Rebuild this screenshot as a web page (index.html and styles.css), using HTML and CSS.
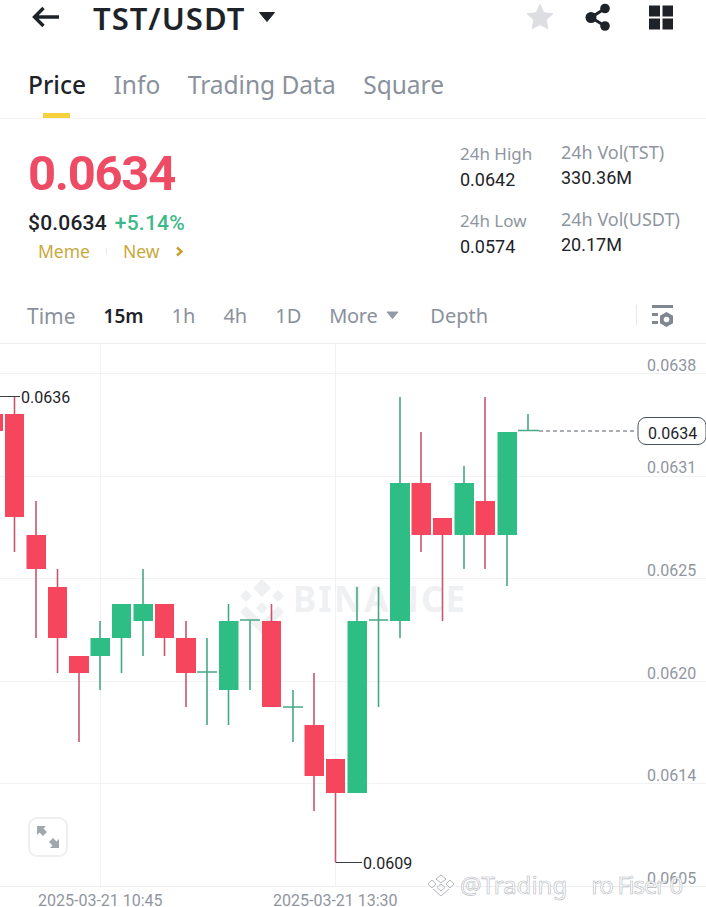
FILE: index.html
```html
<!DOCTYPE html>
<html lang="en">
<head>
    <meta charset="UTF-8">
    <meta name="viewport" content="width=device-width, initial-scale=1.0">
    <title>TST/USDT</title>
    <link rel="stylesheet" href="styles.css">
</head>
<body>
    <div class="page">
        <header class="topbar">
            <svg class="back" width="30" height="24" viewBox="0 0 30 24"><path d="M3 12H28M12.500 3L3.500 12L12.500 21" fill="none" stroke="#1e2329" stroke-width="3.400"/></svg>
            <h1 class="pair">TST/USDT</h1>
            <svg class="caret" width="18" height="12" viewBox="0 0 18 12"><path d="M1.500 1.500H16.500L9 10.500Z" fill="#1e2329" stroke="#1e2329" stroke-linejoin="round"/></svg>
            <div class="actions">
                <svg width="28" height="28" viewBox="0 0 28 28"><path d="M14 1.500L17.800 9.700L26.800 10.800L20.200 17L21.900 25.900L14 21.500L6.100 25.900L7.800 17L1.200 10.800L10.200 9.700Z" fill="#dcdee2" stroke="#dcdee2" stroke-linejoin="round"/></svg>
                <svg width="28" height="28" viewBox="0 0 28 28"><path d="M21 5.500L7 14.500L21 23" fill="none" stroke="#1e2329" stroke-width="3"/><circle cx="21" cy="5.500" r="4.800" fill="#1e2329"/><circle cx="7" cy="14.500" r="5.500" fill="#1e2329"/><circle cx="21" cy="23" r="4.800" fill="#1e2329"/></svg>
                <svg class="menu" width="26" height="26" viewBox="0 0 26 26"><path d="M1 1.500H12V12.500H1ZM14.500 1.500H25V12.500H14.500ZM1 14.500H12V25.500H1ZM14.500 14.500H25V25.500H14.500Z" fill="#1e2329"/></svg>
            </div>
        </header>

        <nav class="tabs">
            <a class="tab active">Price</a>
            <a class="tab">Info</a>
            <a class="tab">Trading Data</a>
            <a class="tab">Square</a>
        </nav>

        <section class="summary">
            <div class="price-box">
                <div class="last-price">0.0634</div>
                <div class="price-line"><span class="usd">$0.0634</span><span class="change">+5.14%</span></div>
                <div class="tags">
                    <span>Meme</span>
                    <i class="tag-sep"></i>
                    <span>New</span>
                    <svg width="9" height="11" viewBox="0 0 9 11"><path d="M2 1.500L6.500 5.500L2 9.500" fill="none" stroke="#c99f2c" stroke-width="2.400"/></svg>
                </div>
            </div>
            <div class="stats stats-left">
                <div class="stat"><span class="stat-name">24h High</span><span class="stat-value">0.0642</span></div>
                <div class="stat"><span class="stat-name">24h Low</span><span class="stat-value">0.0574</span></div>
            </div>
            <div class="stats stats-right">
                <div class="stat"><span class="stat-name">24h Vol(TST)</span><span class="stat-value">330.36M</span></div>
                <div class="stat"><span class="stat-name">24h Vol(USDT)</span><span class="stat-value">20.17M</span></div>
            </div>
        </section>

        <div class="intervals">
            <a class="time">Time</a>
            <a class="current">15m</a>
            <a>1h</a>
            <a>4h</a>
            <a>1D</a>
            <a class="more">More <svg width="13" height="9" viewBox="0 0 13 9"><path d="M1 1H12L6.500 7.500Z" fill="#929aa5" stroke="#929aa5" stroke-linejoin="round"/></svg></a>
            <a>Depth</a>
            <i class="interval-sep"></i>
            <svg class="settings" width="22" height="22" viewBox="0 0 22 22"><path d="M0 1.500H21M0 9.500H6M0 17.500H6" fill="none" stroke="#7f8791" stroke-width="3"/><path d="M14.500 7L21 10.700V18.300L14.500 22L8 18.300V10.700Z" fill="#7f8791"/><circle cx="14.500" cy="14.500" r="2.800" fill="#fff"/></svg>
        </div>

        <div class="chart">
            <svg class="chart-svg" width="706" height="563" viewBox="0 344 706 563">
                <g class="grid">
                    <path d="M0 373.500H706M0 476.500H706M0 578.500H706M0 681.500H706M0 783.500H706"/>
                    <path d="M100.500 344V886M335.500 344V886"/>
                </g>

                <!-- binance mark behind the candles -->
                <g class="mark">
                    <path d="M262 579L271 588L262 597L253 588ZM246 590L252 596L246 602L240 596ZM278 590L284 596L278 602L272 596ZM262 602L268 608L262 614L256 608ZM246 606L262 622L278 606L284 612L262 634L240 612Z"/>
                    <text x="293" y="612">BINANCE</text>
                </g>

                <!-- wicks -->
                <path class="wick-down" d="M14.500 397V552M36 501V638M57.500 569V673M79 656V742M164.500 638V656M186 621V707M271.500 604V621M314 673V811M335.500 793V862M421 432V552M442.500 535V621M485 397V569"/>
                <path class="wick-up" d="M100 621V690M121.500 638V673M143 569V656M207 638V725M228.500 604V725M250 620V690M293 690V742M357 587V621M378.500 587V707M400 397V638M464 466V569M507 535V586M528 414V430"/>

                <!-- dojis -->
                <path class="wick-up" d="M197 672H217M240 620H260M283 707H303M369 620H388M518 430.500H539"/>

                <!-- bodies -->
                <path class="body-down" d="M0 414H3V431H0ZM5 414H24V517H5ZM26.500 535H46V569H26.500ZM48 587H67V638H48ZM69 656H89V673H69ZM155 604H174V638H155ZM176 638H196V673H176ZM262 621H281V707H262ZM304.500 725H324V776H304.500ZM326 759H345V793H326ZM411.500 483H431V535H411.500ZM433 518H452V535H433ZM475.500 501H495V535H475.500Z"/>
                <path class="body-up" d="M90.500 638H110V656H90.500ZM112 604H131V638H112ZM133.500 604H153V621H133.500ZM219 621H238.500V690H219ZM347.500 621H367V793H347.500ZM390 483H410V621H390ZM454.500 483H474V535H454.500ZM497.500 432H517V535H497.500Z"/>

                <!-- high and low markers -->
                <path class="marker" d="M0 396.500H20M335.500 862.500H362"/>
                <text class="chart-text" x="21" y="403">0.0636</text>
                <text class="chart-text" x="363" y="869">0.0609</text>

                <!-- last price line -->
                <path class="last-line" d="M539 431H637"/>
                <rect class="last-box" x="638" y="417.500" width="68" height="27" rx="8"/>
                <text class="chart-text" x="648" y="439">0.0634</text>

                <g class="axis-text">
                    <text x="647" y="371">0.0638</text>
                    <text x="647" y="473">0.0631</text>
                    <text x="647" y="576">0.0625</text>
                    <text x="647" y="679">0.0620</text>
                    <text x="647" y="781">0.0614</text>
                    <text x="647" y="884">0.0605</text>
                    <text x="38" y="906">2025-03-21 10:45</text>
                    <text x="273" y="906">2025-03-21 13:30</text>
                </g>

                <path class="axis-line" d="M0 886.500H706"/>
            </svg>

            <div class="expand">
                <svg width="24" height="24" viewBox="0 0 24 24"><path d="M1 1H10L7.500 3.500L11 7L7 11L3.500 7.500L1 10ZM23 23H14L16.500 20.500L13 17L17 13L20.500 16.500L23 14Z" fill="#a2a6ad"/></svg>
            </div>

            <div class="watermark">
                <svg width="28" height="23" viewBox="0 0 28 23"><path d="M14 1L19 5L14 9L9 5ZM5 6L9 10L5 14L1 10ZM23 6L27 10L23 14L19 10ZM14 10L18 13.500L14 17L10 13.500ZM6 15L14 22L22 15" fill="none" stroke="#b5b8bd" stroke-width="1"/></svg>
                <span>@Trading</span>
                <span class="wm-name">ro Fiser 0</span>
            </div>
        </div>
    </div>
</body>
</html>
```

FILE: styles.css
```css
html, body {
    margin: 0;
    padding: 0;
    background-color: #fff;
}
.page {
    width: 706px;
    height: 907px;
    overflow: hidden;
    font-family: "Noto Sans", Arial, sans-serif;
    color: #1e2329;
}
.topbar {
    height: 36px;
    padding-left: 31px;
    padding-right: 32px;
    display: flex;
    align-items: center;
}
.back {
    margin-right: 32px;
    margin-bottom: 3px;
}
.pair {
    margin: 0 0 1px;
    font-size: 31px;
    line-height: 36px;
    font-weight: 600;
    letter-spacing: 1px;
}
.caret {
    margin-left: 13px;
    margin-bottom: 2px;
}
.actions {
    margin-left: auto;
    margin-bottom: 3px;
    display: flex;
    align-items: center;
    gap: 30px;
}
.menu {
    margin-left: 6px;
}
.tabs {
    margin-top: 31px;
    height: 51px;
    padding-left: 28px;
    display: flex;
    gap: 27.500px;
    border-bottom: 1px solid #f2f3f5;
}
.tab {
    position: relative;
    font-size: 24.500px;
    line-height: 36px;
    color: #8a919c;
}
.tab.active {
    color: #1e2329;
    font-weight: 500;
}
.tab.active::after {
    content: "";
    position: absolute;
    left: 15px;
    bottom: 0;
    width: 27px;
    height: 5px;
    background-color: #f5d13b;
}
.summary {
    height: 169px;
    display: flex;
}
.price-box {
    width: 460px;
    padding-left: 28px;
    box-sizing: border-box;
}
.last-price {
    margin-top: 27px;
    font-family: Roboto, Arial, sans-serif;
    font-size: 49px;
    line-height: 56px;
    font-weight: 700;
    letter-spacing: -1.300px;
    color: #ee4b65;
}
.price-line {
    margin-top: 8px;
    display: flex;
    gap: 8px;
    font-family: Roboto, Arial, sans-serif;
    font-size: 21px;
    line-height: 26px;
    letter-spacing: 0.200px;
}
.usd {
    font-weight: 500;
}
.change {
    color: #3db887;
    font-weight: 500;
}
.tags {
    margin-top: 2px;
    padding-left: 10px;
    display: flex;
    align-items: center;
    font-size: 17.500px;
    line-height: 26px;
    color: #c9a83c;
}
.tag-sep {
    width: 1px;
    height: 6px;
    margin: 0 16px;
    background-color: #e8e8e8;
}
.tags svg {
    margin-left: 15px;
}
.stats {
    display: flex;
    flex-direction: column;
    gap: 15px;
}
.stats-left {
    width: 101px;
    padding-top: 22px;
}
.stats-left .stat-name {
    font-size: 17px;
}
.stats-right {
    padding-top: 20px;
}
.stat {
    display: flex;
    flex-direction: column;
}
.stat-name {
    font-size: 18px;
    line-height: 26px;
    color: #8f96a1;
}
.stat-value {
    font-family: Roboto, Arial, sans-serif;
    font-size: 18px;
    line-height: 26px;
    color: #1e2329;
}
.intervals {
    height: 55px;
    padding-left: 27px;
    padding-right: 32px;
    display: flex;
    align-items: center;
    font-size: 20px;
    color: #8a919c;
    border-bottom: 1px solid #eef0f2;
}
.intervals a {
    margin-right: 28px;
}
.intervals .time {
    font-size: 21px;
}
.intervals .current {
    font-size: 19px;
    color: #1e2329;
    font-weight: 600;
}
.intervals .more {
    margin-right: 31px;
    letter-spacing: -0.300px;
}
.more svg {
    margin-left: 4px;
    vertical-align: 3px;
}
.interval-sep {
    width: 1px;
    height: 21px;
    margin-left: auto;
    margin-right: 15px;
    background-color: #e6e8ea;
}
.chart {
    position: relative;
    height: 563px;
}
.chart-svg {
    display: block;
}
.grid path {
    stroke: #f1f2f4;
    stroke-width: 1;
    fill: none;
}
.axis-line {
    stroke: #eceef0;
    stroke-width: 1;
}
.mark path {
    fill: #eff0f2;
}
.mark text {
    font-family: "Noto Sans", Arial, sans-serif;
    font-size: 35px;
    font-weight: 700;
    letter-spacing: 2px;
    fill: #eff0f2;
}
.wick-down {
    stroke: #c9566f;
    stroke-width: 1.600;
    fill: none;
}
.wick-up {
    stroke: #48a886;
    stroke-width: 1.600;
    fill: none;
}
.body-down {
    fill: #f6465d;
}
.body-up {
    fill: #2ebd85;
}
.marker {
    stroke: #3a3f46;
    stroke-width: 1;
    fill: none;
}
.chart-text {
    font-family: Roboto, Arial, sans-serif;
    font-size: 16px;
    fill: #1e2329;
}
.axis-text text {
    font-family: Roboto, Arial, sans-serif;
    font-size: 16px;
    fill: #8f96a1;
}
.last-line {
    stroke: #555b63;
    stroke-width: 1;
    stroke-dasharray: 4 3;
}
.last-box {
    fill: #fff;
    stroke: #4a5058;
    stroke-width: 1;
}
.expand {
    position: absolute;
    left: 28px;
    top: 473px;
    width: 36px;
    height: 36px;
    display: flex;
    align-items: center;
    justify-content: center;
    border: 2px solid #eeeff1;
    border-radius: 9px;
    background-color: #fff;
}
.watermark {
    position: absolute;
    left: 427px;
    top: 526px;
    display: flex;
    align-items: center;
    gap: 5px;
    font-size: 24px;
    line-height: 30px;
    color: #fff;
    -webkit-text-stroke: 0.600px #b5b8bd;
}
.wm-name {
    margin-left: 19px;
    letter-spacing: -1.300px;
}
```
